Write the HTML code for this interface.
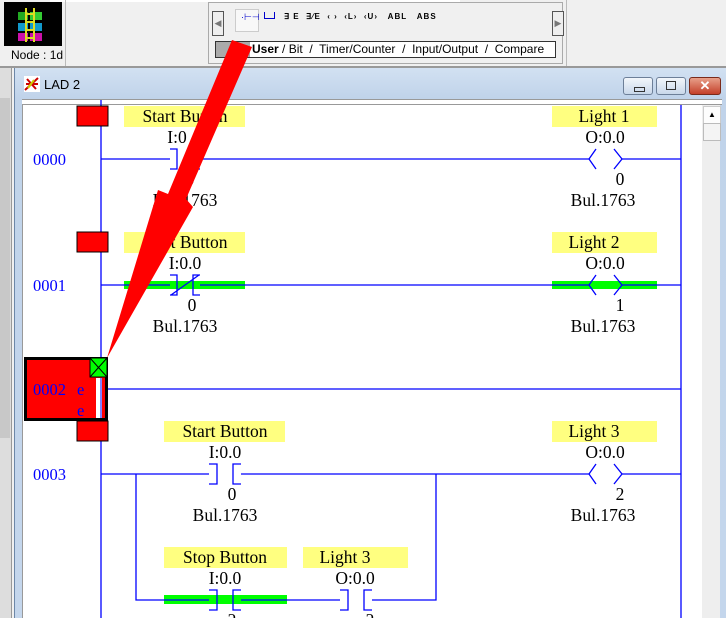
<!DOCTYPE html>
<html><head><style>
body{margin:0;width:726px;height:618px;overflow:hidden;background:#f0f0f0;position:relative;font-family:"Liberation Sans",sans-serif}
.a{position:absolute}
</style></head><body>
<div class="a" style="left:0;top:0;width:726px;height:66px;background:#f0f0f0"></div>
<div class="a" style="left:50px;top:0;width:410px;height:2px;background:#fff"></div>
<div class="a" style="left:4px;top:2px;width:58px;height:44px;background:#000"></div>
<svg class="a" style="left:14px;top:6px" width="36" height="38">
<rect x="4" y="6" width="10" height="8" fill="#2a2"/><rect x="16" y="6" width="12" height="8" fill="#3c3"/>
<rect x="4" y="17" width="10" height="8" fill="#19c"/><rect x="16" y="17" width="12" height="8" fill="#19c"/>
<rect x="4" y="27" width="10" height="8" fill="#c1a"/><rect x="16" y="27" width="12" height="8" fill="#c1a"/>
<path d="M12 2V36M20 2V36M12 8H20M12 16H20M12 24H20M12 32H20" stroke="#dd2" stroke-width="2"/></svg>
<div class="a" style="left:11px;top:48px;font-size:12px;color:#000">Node : 1d</div>
<div class="a" style="left:65px;top:0;width:1px;height:66px;background:#bbb"></div>
<div class="a" style="left:208px;top:2px;width:355px;height:62px;border:1px solid #aaa;box-sizing:border-box"></div>
<div class="a" style="left:566px;top:0;width:1px;height:66px;background:#bbb"></div>
<div class="a" style="left:212px;top:11px;width:10px;height:23px;border:1px solid #555;background:#eee;font-size:9px;color:#777;line-height:23px;text-align:center">◀</div>
<div class="a" style="left:552px;top:11px;width:10px;height:23px;border:1px solid #555;background:#eee;font-size:9px;color:#777;line-height:23px;text-align:center">▶</div>
<div class="a" style="left:235px;top:9px;width:22px;height:21px;border:1px solid #ccc;background:#f8f8f8"></div>
<div class="a" style="left:241px;top:12px;font-size:9px;color:#00c">·⊢⊣</div>
<div class="a" style="left:264px;top:12px;width:9px;height:6px;border:1px solid #00c;border-top:none"></div>
<div class="a" style="left:284px;top:12px;font-size:8px;font-weight:bold;letter-spacing:1px">∃ E&nbsp;&nbsp;∃⁄E&nbsp;&nbsp;‹ ›&nbsp;&nbsp;‹L›&nbsp;&nbsp;‹U›&nbsp;&nbsp;&nbsp;ABL&nbsp;&nbsp;&nbsp;ABS</div>
<div class="a" style="left:215px;top:41px;width:341px;height:17px;border:1px solid #333;background:#fff;box-sizing:border-box"></div>
<div class="a" style="left:216px;top:42px;width:34px;height:15px;background:#aaa"></div>
<div class="a" style="left:252px;top:42px;font-size:12px;white-space:pre"><b>User</b> <span>/ Bit  /  Timer/Counter  /  Input/Output  /  Compare</span></div>
<div class="a" style="left:0;top:66px;width:726px;height:2px;background:#999"></div>
<div class="a" style="left:0;top:68px;width:11px;height:550px;background:#ddd;border-right:1px solid #999"></div>
<div class="a" style="left:0;top:98px;width:10px;height:340px;background:#c8c8c8"></div>
<div class="a" style="left:14px;top:68px;width:712px;height:550px;background:linear-gradient(#d2e1f2,#c0d3ea 30px,#c4d6ec);border-left:1px solid #6d87a8"></div>
<svg class="a" style="left:24px;top:76px" width="16" height="16"><rect width="16" height="16" fill="#fff"/><path d="M1 14L14 2M3 3L12 13M2 8H14" stroke="#c00" stroke-width="2"/><path d="M4 12L10 4" stroke="#cc0" stroke-width="2"/></svg>
<div class="a" style="left:44px;top:77px;font-size:13px;color:#000">LAD 2</div>
<div class="a" style="left:623px;top:77px;width:28px;height:16px;border:1px solid #6d7f98;border-radius:3px;background:linear-gradient(#f2f6fb,#c9d8ea)"><div class="a" style="left:10px;top:9px;width:9px;height:3px;border:1px solid #333"></div></div>
<div class="a" style="left:656px;top:77px;width:28px;height:16px;border:1px solid #6d7f98;border-radius:3px;background:linear-gradient(#f2f6fb,#c9d8ea)"><div class="a" style="left:9px;top:3px;width:8px;height:7px;border:1px solid #333"></div></div>
<div class="a" style="left:689px;top:77px;width:30px;height:16px;border:1px solid #7a2a1a;border-radius:3px;background:linear-gradient(#e8a08a,#c4402a);color:#fff;font-weight:bold;font-size:13px;text-align:center;line-height:16px">✕</div>
<div class="a" style="left:22px;top:99px;width:700px;height:4px;background:#fff;border-top:1px solid #999;border-bottom:1px solid #999"></div>
<div class="a" style="left:22px;top:105px;width:680px;height:513px;background:#fff;border-left:1px solid #999"></div>
<div class="a" style="left:702px;top:105px;width:18px;height:513px;background:#eee"></div>
<div class="a" style="left:703px;top:106px;width:16px;height:16px;background:#fdfdfd;border:1px solid #ccc;font-size:8px;text-align:center;line-height:16px">▲</div>
<div class="a" style="left:703px;top:123px;width:16px;height:16px;background:#f4f4f4;border:1px solid #bbb"></div>
<svg class="a" style="left:0;top:0" width="726" height="618" font-family="Liberation Serif,serif" font-size="17.5">
<g fill="#ffff80">
<rect x="124" y="106" width="121" height="21"/><rect x="552" y="106" width="105" height="21"/>
<rect x="124" y="232" width="121" height="21"/><rect x="552" y="232" width="105" height="21"/>
<rect x="164" y="421" width="121" height="21"/><rect x="552" y="421" width="105" height="21"/>
<rect x="164" y="547" width="123" height="21"/><rect x="303" y="547" width="105" height="21"/>
</g>
<g fill="#0f0">
<rect x="124" y="281" width="121" height="8"/><rect x="552" y="281" width="105" height="8"/>
<rect x="164" y="595" width="123" height="9"/>
</g>
<g stroke="#00f" stroke-width="1.3" fill="none">
<path d="M101 100V618M681 105V618"/>
<path d="M101 159H170M200 159H589M622 159H681"/>
<path d="M101 285H170M200 285H589M622 285H681"/>
<path d="M101 389H681"/>
<path d="M101 474H209M241 474H589M622 474H681M136 474V600H209M241 600H340M372 600H436V474"/>
<path d="M170 149h7v20h-7M200 149h-7v20h7"/>
<path d="M170 275h7v20h-7M200 275h-7v20h7M171 295L199 275"/>
<path d="M209 464h8v20h-8M241 464h-8v20h8"/>
<path d="M209 590h8v20h-8M241 590h-8v20h8"/>
<path d="M340 590h8v20h-8M372 590h-8v20h8"/>
<path d="M596 149l-7 10l7 10M614 149l8 10l-8 10"/>
<path d="M596 275l-7 10l7 10M614 275l8 10l-8 10"/>
<path d="M596 464l-7 10l7 10M614 464l8 10l-8 10"/>
</g>
<g fill="#f00" stroke="#000" stroke-width="1">
<rect x="77" y="106" width="31" height="20"/><rect x="77" y="232" width="31" height="20"/><rect x="77" y="421" width="31" height="20"/>
</g>
<rect x="25.5" y="358.5" width="81" height="61" fill="#f00" stroke="#000" stroke-width="3"/>
<rect x="96" y="378" width="6" height="40" fill="#fff"/><path d="M101 378V418" stroke="#00f"/>
<rect x="90" y="358" width="17" height="19" fill="#0f0" stroke="#000"/><path d="M90 358L107 377M107 358L90 377" stroke="#000"/>
<g fill="#00f" font-size="16.5"><text x="33" y="165">0000</text><text x="33" y="291">0001</text><text x="33" y="395">0002</text><text x="33" y="480">0003</text>
<text x="77" y="395">e</text><text x="77" y="416">e</text></g>
<g fill="#000" text-anchor="middle">
<text x="185" y="122">Start Button</text><text x="604" y="122">Light 1</text>
<text x="177" y="143">I:0</text><text x="605" y="143">O:0.0</text>
<text x="190" y="185">0</text><text x="620" y="185">0</text>
<text x="185" y="206">Bul.1763</text><text x="603" y="206">Bul.1763</text>
<text x="185" y="248">Start Button</text><text x="594" y="248">Light 2</text>
<text x="185" y="269">I:0.0</text><text x="605" y="269">O:0.0</text>
<text x="192" y="311">0</text><text x="620" y="311">1</text>
<text x="185" y="332">Bul.1763</text><text x="603" y="332">Bul.1763</text>
<text x="225" y="437">Start Button</text><text x="594" y="437">Light 3</text>
<text x="225" y="458">I:0.0</text><text x="605" y="458">O:0.0</text>
<text x="232" y="500">0</text><text x="620" y="500">2</text>
<text x="225" y="521">Bul.1763</text><text x="603" y="521">Bul.1763</text>
<text x="225" y="563">Stop Button</text><text x="345" y="563">Light 3</text>
<text x="225" y="584">I:0.0</text><text x="355" y="584">O:0.0</text>
<text x="232" y="626">2</text><text x="370" y="626">2</text>
</g>
<polygon points="232,40 252,47 186,199 193,207 107,358 158,190 168,194" fill="#f00"/>
</svg>
</body></html>
